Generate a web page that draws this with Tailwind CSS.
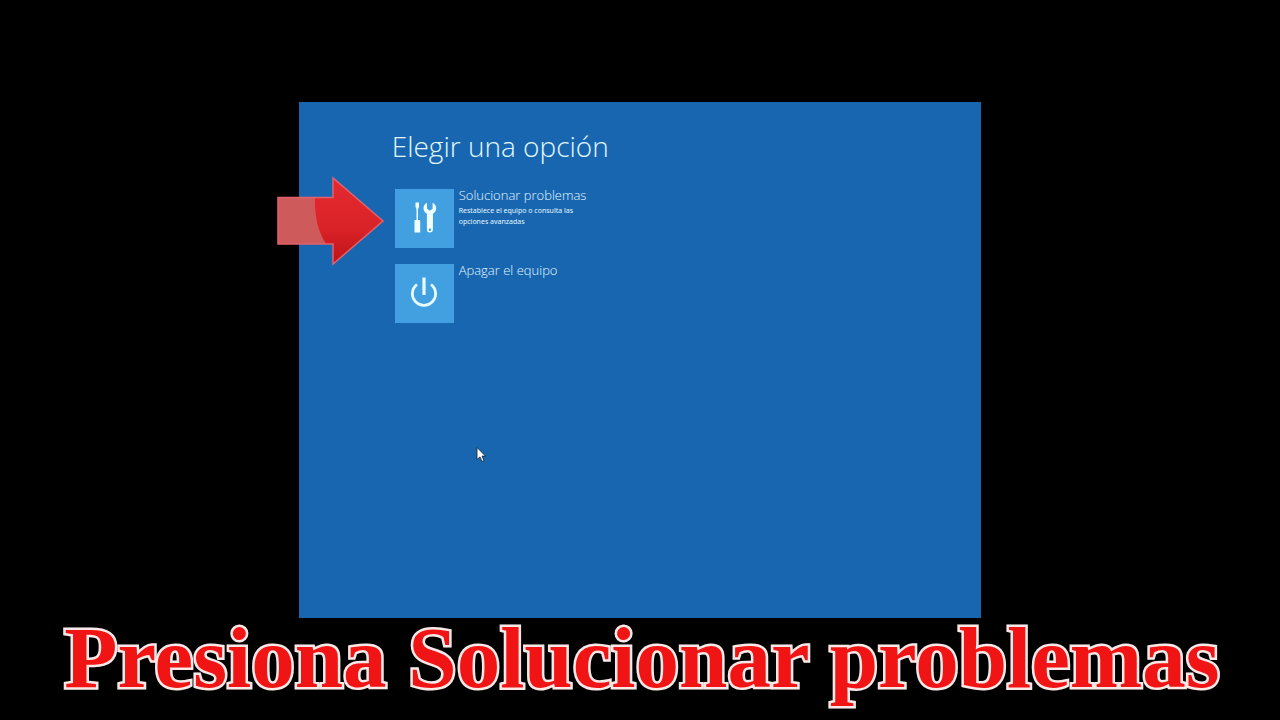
<!DOCTYPE html>
<html lang="es">
<head>
    <meta charset="UTF-8">
    <meta name="viewport" content="width=device-width, initial-scale=1.0">
    <title>Elegir una opción</title>
    <script src="https://cdn.jsdelivr.net/npm/@tailwindcss/browser@4"></script>
</head>
<body class="bg-black">
    <div class="flex flex-col items-center min-h-screen overflow-hidden pt-[102px]">
        <main class="relative w-8/15 min-h-[516px] bg-[#1966b0] pl-[93px] pt-6 text-[#e0f8ff] font-['Open_Sans','Noto_Sans',sans-serif]">
            <h1 class="text-[28px] leading-10 font-light">Elegir una opción</h1>

            <div class="flex flex-col items-start gap-4 mt-[23px] pl-[3px]">
                <button class="flex items-start gap-[5px] text-left">
                    <span class="flex items-center justify-center size-[59px] shrink-0 bg-[#42a0e0]">
                        <svg class="size-[59px]" viewBox="0 0 59 59" fill="#f0ffff">
                            <path d="M20.500 13.500h3.500v4.500l-1 2v11h2.200v12.500h-5.700V31h2V20l-1-2z" />
                            <path d="M32 13.800v6l2.800 2 2.800-2v-6c2.200 1.200 3.600 3 3.600 5.400 0 2.600-1.400 4.300-3.300 5.600V40.500a3 3 0 0 1-6 0V24.800c-2-1.200-3.400-3-3.400-5.600 0-2.400 1.300-4.200 3.500-5.400zM34.900 39.500a1.200 1.200 0 1 0 0 2.400 1.200 1.200 0 0 0 0-2.400z" fill-rule="evenodd" />
                        </svg>
                    </span>
                    <span class="flex flex-col">
                        <span class="text-[13px] leading-3 font-light">Solucionar problemas</span>
                        <span class="w-[132px] mt-1 text-[7px] leading-[11px] font-['Noto_Sans',sans-serif]">Restablece el equipo o consulta las opciones avanzadas</span>
                    </span>
                </button>
                <button class="flex items-start gap-[5px] text-left">
                    <span class="flex items-center justify-center size-[59px] shrink-0 bg-[#42a0e0]">
                        <svg class="size-[59px]" viewBox="0 0 59 59" fill="none" stroke="#e6fcff" stroke-width="2.800">
                            <path d="M29 13.500V31" stroke-width="3.200" />
                            <path d="M22 20.500a11.600 11.600 0 1 0 14 0" />
                        </svg>
                    </span>
                    <span class="text-[13px] leading-3 font-light">Apagar el equipo</span>
                </button>
            </div>

            <!-- pointer arrow over the first option -->
            <svg class="absolute -left-[22px] top-[74px] w-[108px] h-[90px]" viewBox="0 0 108 90">
                <defs>
                    <linearGradient id="red" x1="0" y1="0" x2="0" y2="1">
                        <stop offset="0" stop-color="#e42a30" />
                        <stop offset=".6" stop-color="#d92227" />
                        <stop offset="1" stop-color="#bd1319" />
                    </linearGradient>
                </defs>
                <path d="M1 21.500h55V2l50 43-50 43V68H1z" fill="url(#red)" />
                <path d="M1 21.500h37Q37 49 49 68H1z" fill="#cf5a5c" />
                <path d="M1 21.500h55V2l50 43-50 43V68H1z" fill="none" stroke="#e2616b" stroke-width="1.500" />
            </svg>

            <!-- mouse cursor -->
            <svg class="absolute left-[177px] top-[344px] w-[12px] h-[18px]" viewBox="0 0 12 18">
                <path d="M1 1.500v12l3-2.600 2 4.600 2-1-2-4.400h3.500z" fill="#fff" stroke="#123" stroke-width=".8" />
            </svg>
        </main>

        <p class="pl-1 text-[87px] leading-20 whitespace-nowrap font-bold text-[#f01514] [-webkit-text-stroke:5px_#f8e8e8] [paint-order:stroke_fill] font-['Liberation_Serif',serif]">Presiona Solucionar problemas</p>
    </div>
</body>
</html>
